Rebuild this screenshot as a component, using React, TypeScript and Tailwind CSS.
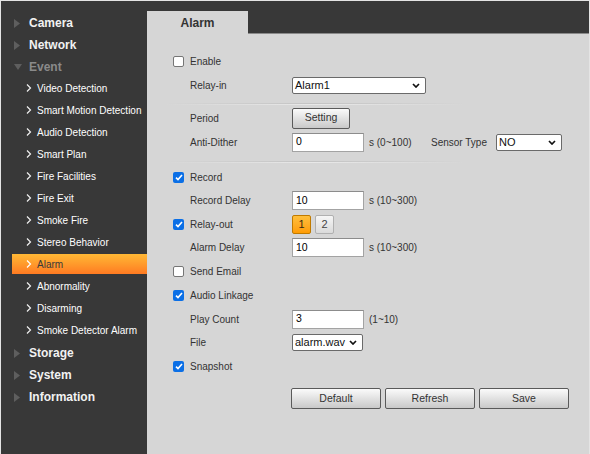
import type { ReactNode } from "react";

const MENU: { label: string; top?: boolean; open?: boolean; active?: boolean }[] = [
  { label: "Camera", top: true },
  { label: "Network", top: true },
  { label: "Event", top: true, open: true },
  { label: "Video Detection" },
  { label: "Smart Motion Detection" },
  { label: "Audio Detection" },
  { label: "Smart Plan" },
  { label: "Fire Facilities" },
  { label: "Fire Exit" },
  { label: "Smoke Fire" },
  { label: "Stereo Behavior" },
  { label: "Alarm", active: true },
  { label: "Abnormality" },
  { label: "Disarming" },
  { label: "Smoke Detector Alarm" },
  { label: "Storage", top: true },
  { label: "System", top: true },
  { label: "Information", top: true },
];

function Sidebar() {
  return (
    <aside className="w-[146px] shrink-0 bg-[#383838] pt-[11px]">
      {MENU.map((m) =>
        m.top ? (
          <div key={m.label} className="flex h-[22px] items-center">
            <span className="ml-[13px] w-[15px]">
              {m.open ? (
                <svg width="8" height="6" viewBox="0 0 8 6">
                  <path d="M0 0 L8 0 L4 6 Z" fill="#5e5e5e" />
                </svg>
              ) : (
                <svg width="6" height="9" viewBox="0 0 6 9">
                  <path d="M0 0 L6 4.5 L0 9 Z" fill="#5e5e5e" />
                </svg>
              )}
            </span>
            <span
              className={`text-[12px] font-bold ${m.open ? "text-[#8a8a8a]" : "text-[#f2f2f2]"}`}
            >
              {m.label}
            </span>
          </div>
        ) : (
          <div key={m.label} className="h-[22px]">
            <div
              className={`ml-[11px] flex h-[20px] items-center ${
                m.active ? "bg-gradient-to-b from-[#ffb835] to-[#ff7a22] text-[#3a3a3a]" : "text-white"
              }`}
            >
              <svg width="6" height="8" viewBox="0 0 6 8" className="ml-[14px] mr-[5px]">
                <path d="M1 0.5 L4.5 4 L1 7.5" fill="none" stroke={m.active ? "#ffffff" : "#f0f0f0"} strokeWidth="1.2" />
              </svg>
              <span className="text-[10px]">{m.label}</span>
            </div>
          </div>
        )
      )}
    </aside>
  );
}

function Check({ on }: { on?: boolean }) {
  return on ? (
    <span className="grid h-[11px] w-[11px] place-items-center rounded-[2px] bg-[#0b6fe6]">
      <svg width="8" height="7" viewBox="0 0 8 7">
        <path d="M1 3.6 L3 5.6 L7 1" fill="none" stroke="#fff" strokeWidth="1.6" />
      </svg>
    </span>
  ) : (
    <span className="h-[11px] w-[11px] rounded-[2px] border border-[#767676] bg-white" />
  );
}

function Row({
  label,
  check,
  h = 24,
  children,
}: {
  label: string;
  check?: boolean;
  h?: number;
  children?: ReactNode;
}) {
  return (
    <div className={`flex items-center ${h === 23 ? "h-[23px]" : "h-[24px]"}`}>
      <div className="flex w-[119px] shrink-0 items-center gap-[6px]">
        {check === undefined ? <span className="w-[11px]" /> : <Check on={check} />}
        <span className="text-[10px] text-[#333]">{label}</span>
      </div>
      {children}
    </div>
  );
}

function Select({ value, w }: { value: string; w: string }) {
  return (
    <div
      className={`flex h-[17px] items-center justify-between rounded-[2px] border border-[#6a6a6a] bg-white pl-[2px] pr-[5px] ${w}`}
    >
      <span className="text-[11px] leading-none text-[#111]">{value}</span>
      <svg width="8" height="5" viewBox="0 0 8 5">
        <path d="M1 1 L4 4 L7 1" fill="none" stroke="#111" strokeWidth="1.7" />
      </svg>
    </div>
  );
}

function Input({ value }: { value: string }) {
  return (
    <div className="flex h-[19px] w-[72px] items-center border border-[#a3a3a3] border-t-[#8c8c8c] bg-white px-[3px]">
      <span className="text-[10.5px] text-black">{value}</span>
    </div>
  );
}

function Unit({ children }: { children: ReactNode }) {
  return <span className="ml-[5px] text-[10px] text-[#333]">{children}</span>;
}

function Btn({ children, w }: { children: ReactNode; w: string }) {
  return (
    <button
      className={`h-[21px] rounded-[2px] border border-[#5a5a5a] bg-gradient-to-b from-[#fbfbfb] to-[#c9c9c9] text-[10.5px] text-[#333] ${w}`}
    >
      {children}
    </button>
  );
}

function Separator({ h, gap }: { h: string; gap: string }) {
  return (
    <div className={`${h} ${gap}`}>
      <div className="ml-[-8px] h-px w-[300px] bg-gradient-to-r from-transparent via-[#c4c4c4] to-transparent" />
      <div className="ml-[-8px] h-px w-[300px] bg-gradient-to-r from-transparent via-[#e8e8e8] to-transparent" />
    </div>
  );
}

export default function App() {
  return (
    <div className="flex h-[454px] w-[590px] overflow-hidden border-x border-t border-[#e4e4e4] font-['Liberation_Sans',Arial,sans-serif]">
      <Sidebar />
      <main className="flex flex-1 flex-col bg-[#d6d6d6]">
        <header className="flex h-[33px] shrink-0 items-end border-b border-[#8a8a8a] bg-[#383838]">
          <div className="-mb-px flex h-[23px] w-[101px] items-center justify-center bg-[#d6d6d6] text-[12px] font-bold text-[#333]">
            Alarm
          </div>
        </header>

        <div className="pl-[26px] pt-[15px]">
          <Row label="Enable" check={false} />
          <Row label="Relay-in">
            <Select value="Alarm1" w="w-[134px]" />
          </Row>
          <Separator h="h-[9px]" gap="pt-[6px]" />
          <Row label="Period">
            <Btn w="w-[58px]">Setting</Btn>
          </Row>
          <Row label="Anti-Dither">
            <Input value="0" />
            <span className="ml-[5px] w-[62px] text-[10px] text-[#333]">s (0~100)</span>
            <span className="text-[10px] text-[#333]">Sensor Type</span>
            <div className="ml-[9px]">
              <Select value="NO" w="w-[66px]" />
            </div>
          </Row>
          <Separator h="h-[11px]" gap="pt-[7px]" />
          <Row label="Record" check />
          <Row label="Record Delay" h={23}>
            <Input value="10" />
            <Unit>s (10~300)</Unit>
          </Row>
          <Row label="Relay-out" check>
            <div className="flex gap-[4px]">
              <span className="grid h-[19px] w-[19px] place-items-center rounded-[2px] border border-[#c07a00] bg-gradient-to-b from-[#ffbf3a] to-[#ff9c00] text-[11px] text-[#3a2a10]">
                1
              </span>
              <span className="grid h-[19px] w-[19px] place-items-center rounded-[2px] border border-[#b0b0b0] bg-gradient-to-b from-[#f6f6f6] to-[#dadada] text-[11px] text-[#444]">
                2
              </span>
            </div>
          </Row>
          <Row label="Alarm Delay" h={23}>
            <Input value="10" />
            <Unit>s (10~300)</Unit>
          </Row>
          <Row label="Send Email" check={false} />
          <Row label="Audio Linkage" check />
          <Row label="Play Count">
            <Input value="3" />
            <Unit>(1~10)</Unit>
          </Row>
          <Row label="File" h={23}>
            <Select value="alarm.wav" w="w-[71px]" />
          </Row>
          <Row label="Snapshot" check />

          <div className="ml-[118px] mt-[10px] flex gap-[4px]">
            <Btn w="w-[90px]">Default</Btn>
            <Btn w="w-[90px]">Refresh</Btn>
            <Btn w="w-[90px]">Save</Btn>
          </div>
        </div>
      </main>
    </div>
  );
}
